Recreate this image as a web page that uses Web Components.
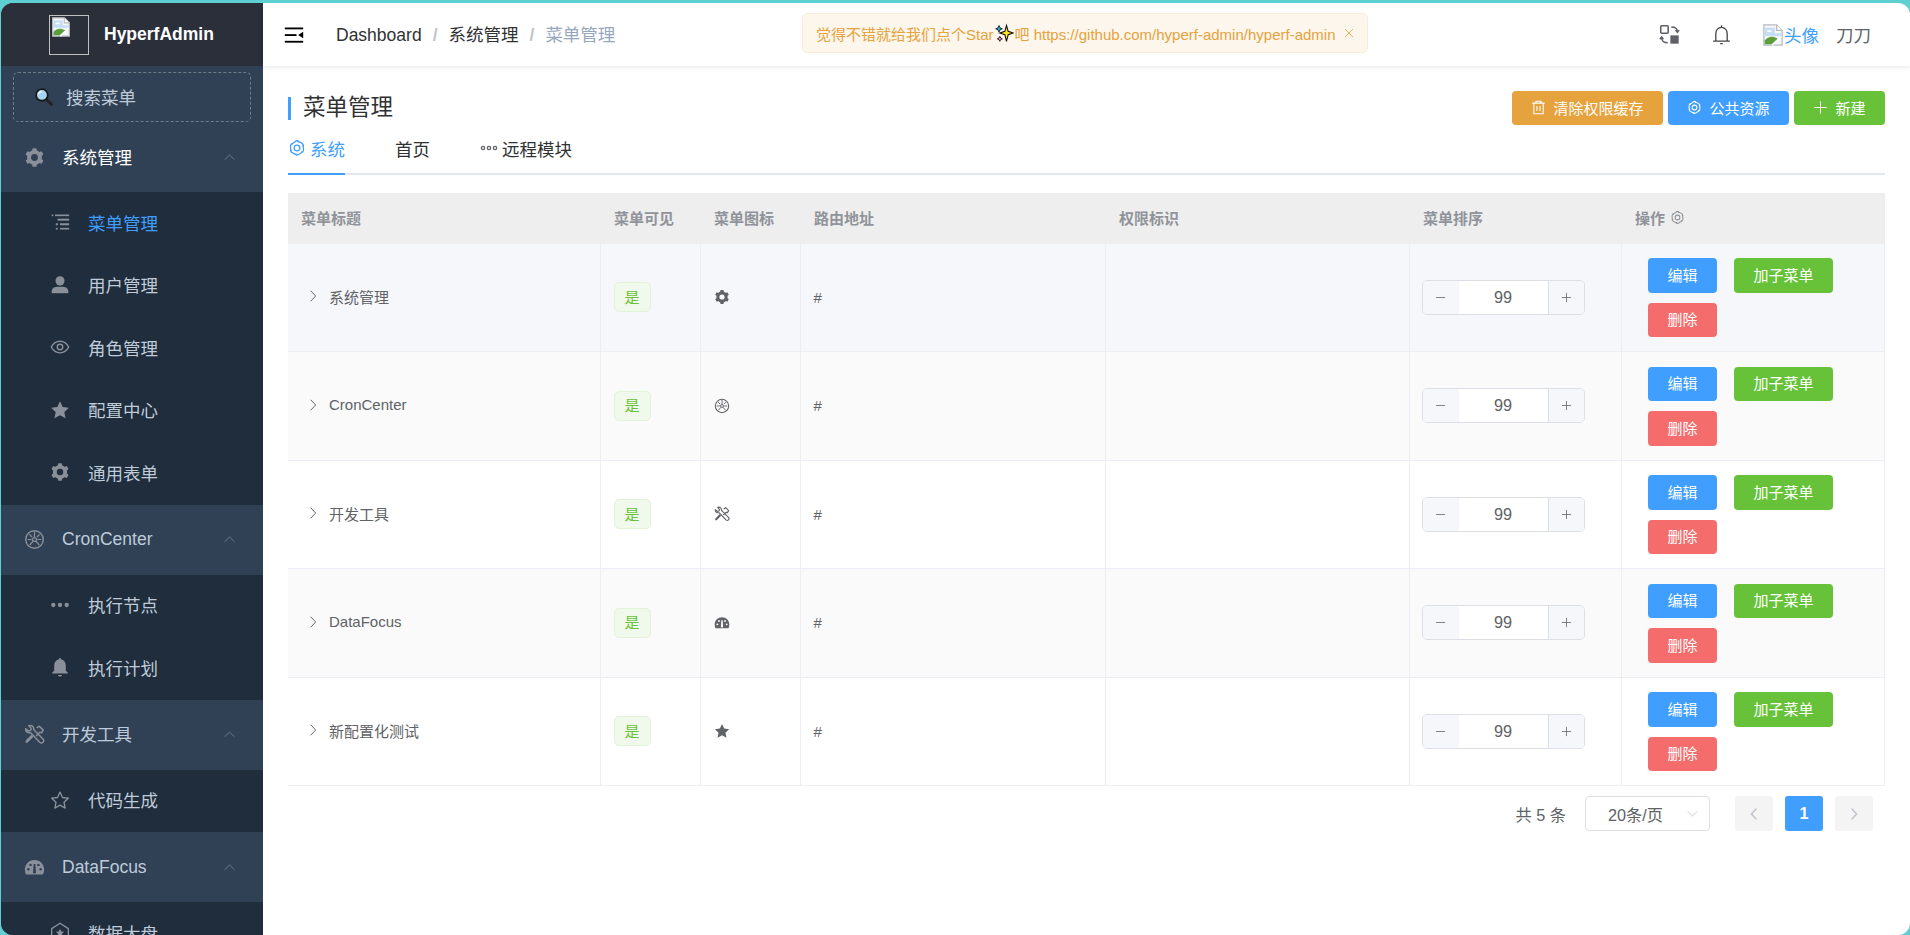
<!DOCTYPE html>
<html lang="zh">
<head>
<meta charset="utf-8">
<title>HyperfAdmin</title>
<style>
  html, body { margin: 0; height: 100%; }
  body {
    background: #5fd0d2;
    font-family: "Liberation Sans", "Noto Sans CJK SC", sans-serif;
    overflow: hidden;
  }
</style>
</head>
<body>
<hf-app>
  <hf-sidebar slot="side">
    <hf-menu-group icon="cog" label="系统管理" active>
      <hf-menu-item icon="list" active>菜单管理</hf-menu-item>
      <hf-menu-item icon="user">用户管理</hf-menu-item>
      <hf-menu-item icon="eye">角色管理</hf-menu-item>
      <hf-menu-item icon="star">配置中心</hf-menu-item>
      <hf-menu-item icon="cog">通用表单</hf-menu-item>
    </hf-menu-group>
    <hf-menu-group icon="wheel" label="CronCenter">
      <hf-menu-item icon="dots">执行节点</hf-menu-item>
      <hf-menu-item icon="bellfill">执行计划</hf-menu-item>
    </hf-menu-group>
    <hf-menu-group icon="tools" label="开发工具">
      <hf-menu-item icon="staroff">代码生成</hf-menu-item>
    </hf-menu-group>
    <hf-menu-group icon="gauge" label="DataFocus">
      <hf-menu-item icon="house">数据大盘</hf-menu-item>
    </hf-menu-group>
  </hf-sidebar>

  <hf-navbar slot="nav"></hf-navbar>

  <hf-page-head>菜单管理</hf-page-head>
  <hf-tabs></hf-tabs>
  <hf-menu-table>
    <hf-menu-row label="系统管理" icon="cog" class="hover"></hf-menu-row>
    <hf-menu-row label="CronCenter" icon="wheel" class="stripe"></hf-menu-row>
    <hf-menu-row label="开发工具" icon="tools"></hf-menu-row>
    <hf-menu-row label="DataFocus" icon="gauge" class="stripe"></hf-menu-row>
    <hf-menu-row label="新配置化测试" icon="star"></hf-menu-row>
  </hf-menu-table>
  <hf-pagination></hf-pagination>
</hf-app>

<script>
// scalloped outline used by the el-icon-setting look-alike
function settingPath(){
  let d = ''
  for(let i=0; i<6; i++){
    const a = (i * 60 - 90) * Math.PI / 180
    const b = (i * 60 - 60) * Math.PI / 180
    const p = (r, t) => `${(12 + r * Math.cos(t)).toFixed(2)} ${(12 + r * Math.sin(t)).toFixed(2)}`
    if(i === 0) d += `M${p(8.6, a - .3)}`
    d += `Q${p(11.4, a)} ${p(8.6, a + .3)}Q${p(8, b - .52)} ${p(8.6, b - .3)}`
  }
  return d + 'Z'
}

const gearTeeth = [0, 60, 120].map(r =>
  `<rect x="9.6" y="1.4" width="4.8" height="21.2" rx="1" transform="rotate(${r} 12 12)"/>`).join('')

const ICONS = {
  cog: `<g fill="currentColor">${gearTeeth}</g><circle cx="12" cy="12" r="6.2" fill="none" stroke="currentColor" stroke-width="4.6"/><circle cx="12" cy="12" r="3.9" fill="var(--hole, transparent)"/>`,
  setting: `<path d="${settingPath()}" fill="none" stroke="currentColor" stroke-width="1.7"/><circle cx="12" cy="12" r="3.8" fill="none" stroke="currentColor" stroke-width="1.7"/>`,
  list: `<g fill="currentColor"><rect x="2" y="3" width="2" height="2"/><rect x="6" y="3" width="17" height="2"/><rect x="9" y="8" width="14" height="2.4"/><rect x="7" y="13.5" width="2.4" height="2.4"/><rect x="12" y="13.5" width="11" height="2.4"/><rect x="7" y="19" width="2.4" height="2"/><rect x="12" y="19" width="11" height="2"/></g>`,
  user: `<g fill="currentColor"><ellipse cx="12" cy="7" rx="5.4" ry="5.6"/><path d="M2 22v-2.4C2 16.4 5 14.4 8 14.2h8c3 .2 6 2.2 6 5.4V22z"/></g>`,
  eye: `<path d="M1.5 12C4 7.4 7.6 5 12 5s8 2.4 10.5 7c-2.5 4.6-6.100 7-10.500 7S4 16.600 1.500 12z" fill="none" stroke="currentColor" stroke-width="1.700"/><circle cx="12" cy="12" r="3.300" fill="none" stroke="currentColor" stroke-width="1.700"/>`,
  star: `<path d="M12 1.500l3.200 6.900 7.500.9-5.500 5.200 1.500 7.500-6.700-3.800-6.700 3.800 1.500-7.500L1.300 9.300l7.500-.9z" fill="currentColor"/>`,
  staroff: `<path d="M12 2.500l3 6.500 7 .9-5.200 4.800 1.400 7-6.200-3.500-6.200 3.500 1.400-7L2 9.900 9 9z" fill="none" stroke="currentColor" stroke-width="1.600" stroke-linejoin="round"/>`,
  dots: `<g fill="currentColor"><circle cx="4" cy="12" r="2.600"/><circle cx="12" cy="12" r="2.600"/><circle cx="20" cy="12" r="2.600"/></g>`,
  dotsoff: `<g fill="none" stroke="currentColor" stroke-width="1.700"><circle cx="4" cy="12" r="2.200"/><circle cx="12" cy="12" r="2.200"/><circle cx="20" cy="12" r="2.200"/></g>`,
  bellfill: `<path d="M12 1.500c1 0 1.600.7 1.700 1.500 3.500.8 5.300 3.800 5.300 7.500v6l2.500 2.300v1H2.500v-1L5 16.500v-6C5 6.800 6.800 3.800 10.300 3c.1-.8.7-1.500 1.700-1.500zM9.500 21.500h5c0 1-1 1.800-2.500 1.800s-2.500-.8-2.500-1.800z" fill="currentColor"/>`,
  bell: `<path d="M2.500 19.500h19M5.500 19.500V11c0-4 2.800-7.200 6.500-7.200s6.500 3.200 6.500 7.200v8.500M12 1.500v2.300M10.500 22.500h3" fill="none" stroke="currentColor" stroke-width="1.500"/>`,
  wheel: `<circle cx="12" cy="12" r="10" fill="none" stroke="currentColor" stroke-width="1.600"/><circle cx="12" cy="12" r="2.200" fill="none" stroke="currentColor" stroke-width="1.400"/><path d="M12 3v6.500M4.200 12h4.500M15.300 12h4.500M6.200 6.200l3 3M17.800 6.200l-3 3M6.500 18.500l3.800-4.500M17.500 18.500L13.700 14" stroke="currentColor" stroke-width="1.400" fill="none"/>`,
  tools: `<g fill="none" stroke="currentColor" stroke-width="1.700" stroke-linejoin="round"><path d="M2 5.500L5.200 8l2.400-.6.600-2.400L5.500 2c2.800-.9 5.300.4 5.600 3.200l.1 1.400 10.500 10.500a2.600 2.600 0 0 1-3.700 3.700L7.900 10.200l-1.500-.1C3.400 9.800 1.400 8.200 2 5.500z"/><path d="M14.500 4.500l3-2 4.500 4.500-2 3-2-.5-4.200 4.200M10.200 14L4 20.200l-1.500.5.500-1.700 6-6"/></g>`,
  gauge: `<path d="M12 3.500C5.800 3.500 1 8.300 1 14.500c0 2 .5 3.800 1.300 5.500h19.400c.8-1.700 1.300-3.500 1.300-5.500 0-6.200-4.800-11-11-11z" fill="currentColor"/><g fill="var(--hole, #304156)"><circle cx="5" cy="14" r="1.400"/><circle cx="7.500" cy="9" r="1.400"/><circle cx="16.500" cy="9" r="1.400"/><circle cx="19" cy="14" r="1.400"/><path d="M11 8h2l.6 8.500a1.700 1.700 0 1 1-3.200 0z"/></g>`,
  house: `<path d="M12 1.500L2 8v15h20V8z" fill="none" stroke="currentColor" stroke-width="1.600"/><path d="M12 8l1.500 3.300 3.500.4-2.600 2.400.7 3.500-3.100-1.800-3.100 1.800.7-3.500L7 11.700l3.500-.4z" fill="currentColor"/>`,
  up: `<path d="M3 16l9-8.500 9 8.500" fill="none" stroke="currentColor" stroke-width="1.500"/>`,
  down: `<path d="M3 8l9 8.500L21 8" fill="none" stroke="currentColor" stroke-width="1.500"/>`,
  right: `<path d="M8 3l8.500 9L8 21" fill="none" stroke="currentColor" stroke-width="1.700"/>`,
  pgright: `<path d="M8 3l8.500 9L8 21" fill="none" stroke="currentColor" stroke-width="2.600"/>`,
  pgleft: `<path d="M16 3l-8.500 9 8.500 9" fill="none" stroke="currentColor" stroke-width="2.600"/>`,
  close: `<path d="M4 4l16 16M20 4L4 20" fill="none" stroke="currentColor" stroke-width="1.600"/>`,
  plus: `<path d="M12 2v20M2 12h20" fill="none" stroke="currentColor" stroke-width="1.700"/>`,
  minus: `<path d="M2 12h20" fill="none" stroke="currentColor" stroke-width="1.700"/>`,
  trash: `<path d="M2 5h20M8 5V2h8v3M4.500 5v17h15V5M9.500 9.500v8M14.500 9.500v8" fill="none" stroke="currentColor" stroke-width="1.700"/>`,
  fold: `<g fill="#000"><rect x="1" y="3" width="22" height="2.200"/><rect x="1" y="11" width="14" height="2.200"/><rect x="1" y="19" width="22" height="2.200"/><path d="M23 8v8l-6-4z"/></g>`,
  swap: `<g fill="none" stroke="currentColor" stroke-width="1.800"><rect x="2" y="2" width="8.500" height="8.500" rx="1"/><path d="M14 3.500c4 0 7 1.500 7 5.500M19 7l2 2.500L23 7" /><path d="M10 21.500c-4 0-7-1.500-7-6M5 17.500l-2-2.500-2 2.500"/></g><rect x="13" y="13" width="9.500" height="9.500" fill="currentColor"/>`,
  search: `<circle cx="9.500" cy="9.500" r="7" fill="#a8d5f5" stroke="#1a1a1a" stroke-width="2.200"/><path d="M5.500 8c.6-1.600 1.900-2.500 3.500-2.600" stroke="#fff" stroke-width="1.600" fill="none"/><path d="M15 15l7 7" stroke="#222" stroke-width="3.400"/>`,
  broken: `<path d="M2 1h14l6 6v16H2z" fill="#f4f6f8" stroke="#b8bcc0" stroke-width="1.400"/><path d="M16 1v6h6" fill="#fff" stroke="#b8bcc0" stroke-width="1.400"/><path d="M3 4h11v6h7v3H3z" fill="#c5def5"/><path d="M5 8c2-2 4-2 6 0-1 1-5 1-6 0z" fill="#fff"/><path d="M3 21v-3c4-5 9-5 14-2l-6 6H3z" fill="#5b9e3b"/><path d="M21 14L11 23" stroke="#fff" stroke-width="2"/>`,
  sparkle: `<path d="M15 3l2 7 6 2-6 2-2 8-2-8-6-2 6-2z" fill="#ffe81a" stroke="#111" stroke-width="1.300"/><path d="M6 3l1.200 2.800L10 7 7.200 8.200 6 11 4.800 8.200 2 7l2.800-1.200z" fill="#2aa3d6" stroke="#111" stroke-width="1"/><path d="M7 16l1 2 2 1-2 1-1 2-1-2-2-1 2-1z" fill="#ef8ab8" stroke="#111" stroke-width="1"/>`
}

class HfIcon extends HTMLElement{
  connectedCallback(){
    const size = this.getAttribute('size') || 16
    const root = this.attachShadow({mode: 'open'})
    root.innerHTML = `<style>
      :host{display: inline-flex; width: ${size}px; height: ${size}px; flex: none;}
      svg{display: block; width: 100%; height: 100%;}
    </style><svg viewBox="0 0 24 24">${ICONS[this.getAttribute('name')] || ''}</svg>`
  }
}

class HfApp extends HTMLElement{
  constructor(){
    super()
    this.attachShadow({mode: 'open'}).innerHTML = `<style>
      :host{
        display: flex;
        margin: 3px 0 0 1px;
        height: 932px;
        background: #fff;
        border-radius: 12px;
        overflow: hidden;
      }
      .main{flex: 1; min-width: 0; display: flex; flex-direction: column;}
      .content{padding: 25px 25px 0; display: flex; flex-direction: column;}
    </style>
    <slot name="side"></slot>
    <div class="main">
      <slot name="nav"></slot>
      <div class="content"><slot></slot></div>
    </div>`
  }
}

class HfSidebar extends HTMLElement{
  constructor(){
    super()
    this.attachShadow({mode: 'open'}).innerHTML = `<style>
      :host{
        display: flex;
        flex-direction: column;
        flex: none;
        width: 262px;
        height: 932px;
        overflow: hidden;
        background: #304156;
        --hole: #304156;
      }
      .brand{
        flex: none;
        display: flex;
        align-items: center;
        height: 63px;
        padding-left: 48px;
        background: #2b2f3a;
        color: #fff;
        font-size: 17.5px;
        font-weight: bold;
      }
      .logo{
        box-sizing: border-box;
        width: 40px;
        height: 40px;
        margin-right: 15px;
        padding: 1px;
        border: 1px solid #c0c0c0;
      }
      .search{
        flex: none;
        box-sizing: border-box;
        display: flex;
        align-items: center;
        gap: 12px;
        height: 50px;
        margin: 6px 12px 0;
        padding-left: 20px;
        padding-bottom: 1px;
        border: 1px dashed #6f7c8a;
        border-radius: 5px;
        color: #bfcbd9;
        font-size: 17.5px;
      }
    </style>
    <div class="brand"><div class="logo"><hf-icon name="broken" size="20"></hf-icon></div>HyperfAdmin</div>
    <div class="search"><hf-icon name="search" size="20"></hf-icon>搜索菜单</div>
    <slot></slot>`
  }
}

class HfMenuGroup extends HTMLElement{
  connectedCallback(){
    const on = this.hasAttribute('active')
    const label = this.getAttribute('label')
    // les titres en caracteres latins tombent plus bas que les titres chinois
    const pad = /^[\x00-\x7f]+$/.test(label) ? '0 0 0 0' : '0 0 2px 0'
    this.attachShadow({mode: 'open'}).innerHTML = `<style>
      :host{display: block; flex: none;}
      .head{
        box-sizing: border-box;
        display: flex;
        align-items: center;
        height: 70px;
        padding: 0 27px 0 23px;
        background: #304156;
        color: ${on ? '#fff' : '#bfcbd9'};
        font-size: 17.5px;
      }
      .ico{color: #8a9099; margin-right: 17px; --hole: #304156;}
      .txt{flex: 1; padding: ${pad};}
      .arrow{color: #7b8694;}
      .sub{background: #1f2d3d;}
    </style>
    <div class="head">
      <hf-icon class="ico" name="${this.getAttribute('icon')}" size="21"></hf-icon>
      <span class="txt">${label}</span>
      <hf-icon class="arrow" name="up" size="13"></hf-icon>
    </div>
    <div class="sub"><slot></slot></div>`
  }
}

class HfMenuItem extends HTMLElement{
  connectedCallback(){
    const on = this.hasAttribute('active')
    this.attachShadow({mode: 'open'}).innerHTML = `<style>
      :host{
        box-sizing: border-box;
        display: flex;
        align-items: center;
        height: 62.5px;
        padding: 0 0 2px 49px;
        color: ${on ? '#409eff' : '#bfcbd9'};
        font-size: 17.5px;
        --hole: #1f2d3d;
      }
      hf-icon{color: #8a9099; margin-right: 18px;}
    </style>
    <hf-icon name="${this.getAttribute('icon')}" size="20"></hf-icon><slot></slot>`
  }
}

class HfNavbar extends HTMLElement{
  constructor(){
    super()
    this.attachShadow({mode: 'open'}).innerHTML = `<style>
      :host{
        display: flex;
        align-items: center;
        flex: none;
        height: 63px;
        box-shadow: 0 1px 5px rgba(0,21,41,.1);
        color: #303133;
        font-size: 17.5px;
      }
      .fold{margin: 0 32px 0 21px; color: #000;}
      .crumb{display: flex; align-items: baseline; gap: 11px; width: 466px; margin-top: -3px;}
      .crumb i{font-style: normal; color: #c0c4cc; font-weight: bold;}
      .crumb .last{color: #97a8be;}
      .alert{
        box-sizing: border-box;
        display: flex;
        align-items: center;
        width: 566px;
        height: 40px;
        margin-top: -3px;
        padding: 0 12px 0 13px;
        background: #fdf6ec;
        border: 1px solid #faecd8;
        border-radius: 5px;
        color: #e6a23c;
        font-size: 15px;
        white-space: nowrap;
      }
      .alert .msg{flex: 1; display: flex; align-items: center;}
      .alert .msg hf-icon{margin-right: 1px;}
      .alert .close{color: #e6a23c;}
      .tools{display: flex; align-items: center; margin-left: 291px; color: #5f6166;}
      .tools .swap{margin-right: 31px;}
      .tools .bell{margin-right: 30px; color: #444;}
      .avatar{display: flex; align-items: center; color: #409eff; font-size: 17.5px; margin-right: 17px;}
      .who{color: #606266;}
    </style>
    <hf-icon class="fold" name="fold" size="20"></hf-icon>
    <div class="crumb"><span>Dashboard</span><i>/</i><span>系统管理</span><i>/</i><span class="last">菜单管理</span></div>
    <div class="alert">
      <span class="msg">觉得不错就给我们点个Star<hf-icon name="sparkle" size="20"></hf-icon>吧&nbsp;https://github.com/hyperf-admin/hyperf-admin</span>
      <hf-icon class="close" name="close" size="12"></hf-icon>
    </div>
    <div class="tools">
      <hf-icon class="swap" name="swap" size="21"></hf-icon>
      <hf-icon class="bell" name="bell" size="21"></hf-icon>
      <span class="avatar"><hf-icon name="broken" size="22"></hf-icon>头像</span>
      <span class="who">刀刀</span>
    </div>`
  }
}

class HfButton extends HTMLElement{
  connectedCallback(){
    const colors = {primary: '#409eff', success: '#67c23a', warning: '#e6a23c', danger: '#f56c6c'}
    const c = colors[this.getAttribute('type')] || '#409eff'
    const icon = this.getAttribute('icon')
    this.attachShadow({mode: 'open'}).innerHTML = `<style>
      :host{
        box-sizing: border-box;
        display: inline-flex;
        align-items: center;
        justify-content: center;
        gap: 7px;
        height: 34.5px;
        padding: 0 19.5px 2px;
        background: ${c};
        border-radius: 4px;
        color: #fff;
        font-size: 15px;
        white-space: nowrap;
      }
    </style>${icon ? `<hf-icon name="${icon}" size="15"></hf-icon>` : ''}<slot></slot>`
  }
}

class HfPageHead extends HTMLElement{
  constructor(){
    super()
    this.attachShadow({mode: 'open'}).innerHTML = `<style>
      :host{display: flex; align-items: center; height: 34px;}
      h1{
        flex: 1;
        margin: 0 0 -1px;
        padding-left: 12px;
        border-left: 3px solid #409eff;
        height: 23px;
        line-height: 21px;
        color: #303133;
        font-size: 22.5px;
        font-weight: normal;
      }
      .btns{display: flex; gap: 5px;}
    </style>
    <h1><slot></slot></h1>
    <div class="btns">
      <hf-button type="warning" icon="trash">清除权限缓存</hf-button>
      <hf-button type="primary" icon="setting">公共资源</hf-button>
      <hf-button type="success" icon="plus">新建</hf-button>
    </div>`
  }
}

class HfTabs extends HTMLElement{
  constructor(){
    super()
    this.attachShadow({mode: 'open'}).innerHTML = `<style>
      :host{
        display: flex;
        height: 50px;
        box-sizing: border-box;
        border-bottom: 2.5px solid #e4e7ed;
        color: #303133;
        font-size: 17.5px;
      }
      .tab{
        box-sizing: border-box;
        display: flex;
        align-items: center;
        gap: 4px;
        height: 50px;
        padding-right: 50px;
        padding-bottom: 4px;
      }
      .on{color: #409eff; position: relative; padding-right: 0; margin-right: 50px;}
      .on::after{content: ""; position: absolute; left: 0; right: 0; bottom: 0; height: 2.5px; background: #409eff;}
      .more{color: #606266;}
    </style>
    <div class="tab on"><hf-icon name="setting" size="18"></hf-icon>系统</div>
    <div class="tab">首页</div>
    <div class="tab"><hf-icon class="more" name="dotsoff" size="18"></hf-icon>远程模块</div>`
  }
}

class HfTag extends HTMLElement{
  constructor(){
    super()
    this.attachShadow({mode: 'open'}).innerHTML = `<style>
      :host{
        box-sizing: border-box;
        display: inline-flex;
        align-items: center;
        justify-content: center;
        width: 37px;
        height: 30px;
        padding-bottom: 2px;
        background: #f0f9eb;
        border: 1px solid #e1f3d8;
        border-radius: 5px;
        color: #67c23a;
        font-size: 15px;
      }
    </style><slot></slot>`
  }
}

class HfNumberInput extends HTMLElement{
  constructor(){
    super()
    this.attachShadow({mode: 'open'}).innerHTML = `<style>
      :host{
        box-sizing: border-box;
        display: flex;
        width: 163px;
        height: 35px;
        margin-left: -1px;
        background: #fff;
        border: 1px solid #dcdfe6;
        border-radius: 5px;
        overflow: hidden;
        color: #606266;
        font-size: 16.25px;
      }
      .step{
        box-sizing: border-box;
        flex: none;
        display: flex;
        align-items: center;
        justify-content: center;
        width: 36px;
        background: #f5f7fa;
      }
      .step:first-child{border-right: 1px solid #dcdfe6;}
      .step:last-child{border-left: 1px solid #dcdfe6;}
      .val{flex: 1; display: flex; align-items: center; justify-content: center;}
    </style>
    <div class="step"><hf-icon name="minus" size="11"></hf-icon></div>
    <div class="val">99</div>
    <div class="step"><hf-icon name="plus" size="11"></hf-icon></div>`
  }
}

class HfMenuTable extends HTMLElement{
  constructor(){
    super()
    this.attachShadow({mode: 'open'}).innerHTML = `<style>
      :host{
        display: block;
        margin-top: 18px;
        --cols: 313px 100px 100px 305px 304px 212px 263px;
      }
      .head{
        display: grid;
        grid-template-columns: var(--cols);
        height: 50.5px;
        background: #eeeeee;
        color: #909399;
        font-size: 15px;
        font-weight: bold;
      }
      .head div{box-sizing: border-box; display: flex; align-items: center; gap: 5px; padding: 0 0 2px 13px;}
    </style>
    <div class="head">
      <div>菜单标题</div><div>菜单可见</div><div>菜单图标</div><div>路由地址</div>
      <div>权限标识</div><div>菜单排序</div><div>操作 <hf-icon name="setting" size="15"></hf-icon></div>
    </div>
    <slot></slot>`
  }
}

class HfMenuRow extends HTMLElement{
  connectedCallback(){
    this.attachShadow({mode: 'open'}).innerHTML = `<style>
      :host{
        display: grid;
        grid-template-columns: var(--cols);
        box-sizing: border-box;
        height: 108.5px;
        background: #fff;
        color: #606266;
        font-size: 15px;
        --hole: #fff;
      }
      :host(.hover){background: #f5f7fa; --hole: #f5f7fa;}
      :host(.stripe){background: #fafafa; --hole: #fafafa;}
      .cell{
        box-sizing: border-box;
        display: flex;
        align-items: center;
        padding-left: 12.5px;
        border-right: 1px solid #ebeef5;
        border-bottom: 1px solid #ebeef5;
      }
      .cell:first-child{border-left: 1px solid #ebeef5;}
      .title hf-icon{margin: 0 9px 0 5.5px;}
      .title{color: #606266; padding-bottom: 2px;}
      .ops{
        display: flex;
        flex-wrap: wrap;
        align-content: flex-start;
        gap: 10px 17px;
        padding: 14.5px 0 0 26px;
      }
    </style>
    <div class="cell title"><hf-icon name="right" size="14"></hf-icon>${this.getAttribute('label')}</div>
    <div class="cell"><hf-tag>是</hf-tag></div>
    <div class="cell"><hf-icon name="${this.getAttribute('icon')}" size="16"></hf-icon></div>
    <div class="cell">#</div>
    <div class="cell"></div>
    <div class="cell"><hf-number-input></hf-number-input></div>
    <div class="cell ops">
      <hf-button type="primary">编辑</hf-button>
      <hf-button type="success">加子菜单</hf-button>
      <hf-button type="danger">删除</hf-button>
    </div>`
  }
}

class HfPagination extends HTMLElement{
  constructor(){
    super()
    this.attachShadow({mode: 'open'}).innerHTML = `<style>
      :host{
        display: flex;
        align-items: center;
        justify-content: flex-end;
        height: 35px;
        margin-top: 10px;
        padding-right: 12px;
        color: #606266;
        font-size: 16.25px;
      }
      .total{margin-right: 19px;}
      .select{
        box-sizing: border-box;
        display: flex;
        align-items: center;
        justify-content: space-between;
        width: 125px;
        height: 35px;
        margin-right: 25px;
        padding: 0 10px 0 22px;
        border: 1px solid #dcdfe6;
        border-radius: 4px;
      }
      .select hf-icon{color: #c0c4cc;}
      .pg{
        display: flex;
        align-items: center;
        justify-content: center;
        width: 38px;
        height: 35px;
        margin-right: 12px;
        background: #f4f4f5;
        border-radius: 3px;
        color: #c0c4cc;
      }
      .pg:last-child{margin-right: 0;}
      .cur{background: #409eff; color: #fff; font-weight: bold;}
    </style>
    <span class="total">共 5 条</span>
    <div class="select">20条/页<hf-icon name="down" size="13"></hf-icon></div>
    <div class="pg"><hf-icon name="pgleft" size="14"></hf-icon></div>
    <div class="pg cur">1</div>
    <div class="pg"><hf-icon name="pgright" size="14"></hf-icon></div>`
  }
}

customElements.define('hf-icon', HfIcon)
customElements.define('hf-button', HfButton)
customElements.define('hf-tag', HfTag)
customElements.define('hf-number-input', HfNumberInput)
customElements.define('hf-menu-item', HfMenuItem)
customElements.define('hf-menu-group', HfMenuGroup)
customElements.define('hf-sidebar', HfSidebar)
customElements.define('hf-navbar', HfNavbar)
customElements.define('hf-page-head', HfPageHead)
customElements.define('hf-tabs', HfTabs)
customElements.define('hf-menu-row', HfMenuRow)
customElements.define('hf-menu-table', HfMenuTable)
customElements.define('hf-pagination', HfPagination)
customElements.define('hf-app', HfApp)
</script>
</body>
</html>
